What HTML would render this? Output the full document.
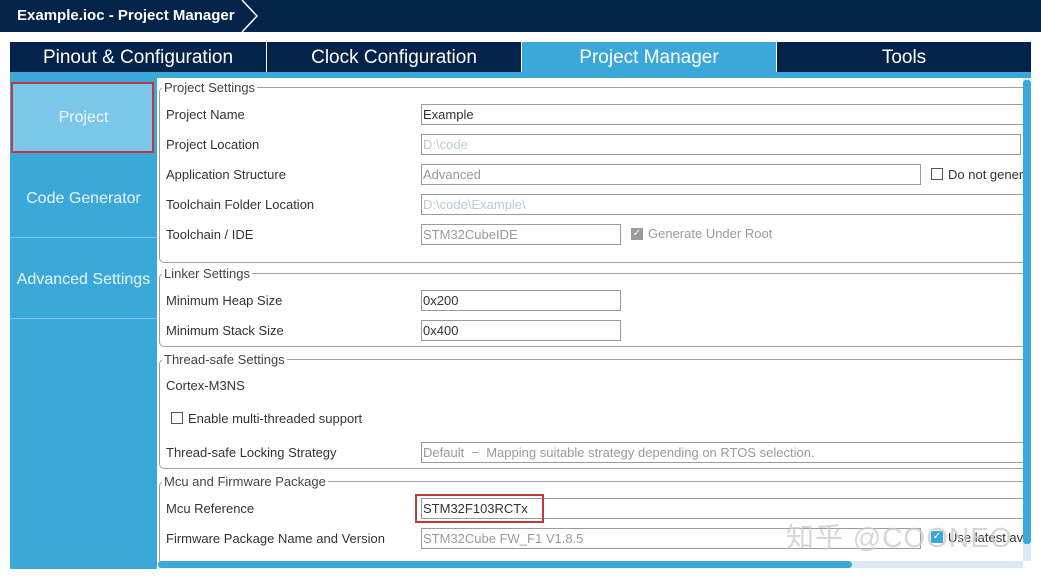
<!DOCTYPE html>
<html><head><meta charset="utf-8"><style>
*{margin:0;padding:0;box-sizing:border-box}
body{width:1041px;height:579px;background:#fff;position:relative;overflow:hidden;font-family:"Liberation Sans",Arial,sans-serif;font-size:13px;color:#3a3a3a}
.a{position:absolute;white-space:nowrap}
.title{left:0;top:0;width:1041px;height:32px;background:#03234b}
.tab{top:42px;height:30px;background:#03234b;color:#fff;font-size:19px;text-align:center;line-height:32px}
.side{left:10px;top:72px;width:147px;height:497px;background:#3ba8da}
.si{color:#e8f6fd;font-size:16px;text-align:center;width:147px;left:10px}
.sep{left:10px;width:147px;height:1px;background:#7fcaec}
.fs{border:1px solid #a0a0a0;border-radius:5px;border-right:none;left:159px;width:880px}
.lg{background:#fff;padding:0 2px;color:#444;font-size:13px;left:162px}
.lb{left:166px;font-size:13px;color:#333}
.in{left:421px;height:21px;border:1px solid #9a9a9a;background:#fff;font-size:13px;line-height:19px;padding-left:1px;color:#333;overflow:hidden}
.dis{color:#9a9a9a}
.dis2{color:#b8cbd8}
.cb{width:12px;height:12px;border:1px solid #555;background:#fff}
</style></head><body>
<div class="a title"></div>
<div class="a" style="left:17px;top:7px;color:#fff;font-weight:bold;font-size:15px">Example.ioc - Project Manager</div>
<svg class="a" style="left:240px;top:0" width="22" height="32"><path d="M2 0 L17 16 L2 32" stroke="#fff" stroke-width="1.5" fill="none"/></svg>
<div class="a" style="left:10px;top:72px;width:1021px;height:6px;background:#3ba8da"></div>
<div class="a tab" style="left:10px;width:256px">Pinout &amp; Configuration</div>
<div class="a tab" style="left:267px;width:254px">Clock Configuration</div>
<div class="a tab" style="left:522px;width:254px;background:#3ba8da">Project Manager</div>
<div class="a tab" style="left:777px;width:254px">Tools</div>
<div class="a side"></div>
<div class="a" style="left:11px;top:82px;width:143px;height:71px;background:#7cc6ea;border:2px solid #c0393f"></div>
<div class="a si" style="top:109px;color:#eef8fd">Project</div>
<div class="a si" style="top:190px">Code Generator</div>
<div class="a sep" style="top:237px"></div>
<div class="a si" style="top:271px">Advanced Settings</div>
<div class="a sep" style="top:318px"></div>
<div class="a" style="left:157px;top:78px;width:866px;height:483px;background:#fff"></div>
<div class="a" style="left:157px;top:78px;width:866px;height:483px;overflow:hidden">
<div style="position:absolute;left:-157px;top:-78px;width:1041px;height:579px">
<div class="a fs" style="top:87px;height:176px"></div>
<div class="a lg" style="top:80px">Project Settings</div>
<div class="a lb" style="top:107px">Project Name</div><div class="a in" style="top:104px;width:640px">Example</div>
<div class="a lb" style="top:137px">Project Location</div><div class="a in dis2" style="top:134px;width:600px">D:\code</div>
<div class="a lb" style="top:167px">Application Structure</div><div class="a in dis" style="top:164px;width:500px">Advanced</div>
<div class="a cb" style="left:931px;top:168px"></div><div class="a" style="left:948px;top:167px;color:#333">Do not generate</div>
<div class="a lb" style="top:197px">Toolchain Folder Location</div><div class="a in dis2" style="top:194px;width:640px">D:\code\Example\</div>
<div class="a lb" style="top:227px">Toolchain / IDE</div><div class="a in dis" style="top:224px;width:200px">STM32CubeIDE</div>
<div class="a" style="left:631px;top:228px;width:12px;height:12px;background:#9a9a9a;color:#fff;font-size:10px;line-height:12px;text-align:center">✓</div>
<div class="a dis" style="left:648px;top:226px">Generate Under Root</div>

<div class="a fs" style="top:273px;height:74px"></div>
<div class="a lg" style="top:266px">Linker Settings</div>
<div class="a lb" style="top:293px">Minimum Heap Size</div><div class="a in" style="top:290px;width:200px">0x200</div>
<div class="a lb" style="top:323px">Minimum Stack Size</div><div class="a in" style="top:320px;width:200px">0x400</div>

<div class="a fs" style="top:359px;height:110px"></div>
<div class="a lg" style="top:352px">Thread-safe Settings</div>
<div class="a lb" style="top:378px">Cortex-M3NS</div>
<div class="a cb" style="left:171px;top:412px"></div><div class="a lb" style="left:188px;top:411px">Enable multi-threaded support</div>
<div class="a lb" style="top:445px">Thread-safe Locking Strategy</div><div class="a in dis" style="top:442px;width:640px">Default &nbsp;−&nbsp; Mapping suitable strategy depending on RTOS selection.</div>

<div class="a fs" style="top:481px;height:100px"></div>
<div class="a lg" style="top:474px">Mcu and Firmware Package</div>
<div class="a lb" style="top:501px">Mcu Reference</div><div class="a in" style="top:498px;width:640px">STM32F103RCTx</div>
<div class="a" style="left:415px;top:494px;width:129px;height:29px;border:2px solid #c0393f"></div>
<div class="a lb" style="top:531px">Firmware Package Name and Version</div><div class="a in dis" style="top:528px;width:500px">STM32Cube FW_F1 V1.8.5</div>
<div class="a" style="left:931px;top:531px;width:12px;height:12px;background:#3ba8da;color:#fff;font-size:10px;line-height:12px;text-align:center">✓</div>
<div class="a" style="left:948px;top:530px;color:#333">Use latest available</div>
<div class="a" style="left:786px;top:516px;font-size:28px;color:rgba(200,200,200,0.75);font-family:'Liberation Sans','Noto Sans CJK SC',sans-serif;letter-spacing:1px">知乎 @COONEO</div>
</div></div>
<div class="a" style="left:1023px;top:78px;width:8px;height:483px;background:#dce9f4"></div>
<div class="a" style="left:1023px;top:80px;width:8px;height:464px;background:#3ba8da;border-radius:3px"></div>
<div class="a" style="left:158px;top:561px;width:865px;height:7px;background:#dce9f4"></div>
<div class="a" style="left:158px;top:561px;width:694px;height:7px;background:#3ba8da;border-radius:4px"></div>
</body></html>
